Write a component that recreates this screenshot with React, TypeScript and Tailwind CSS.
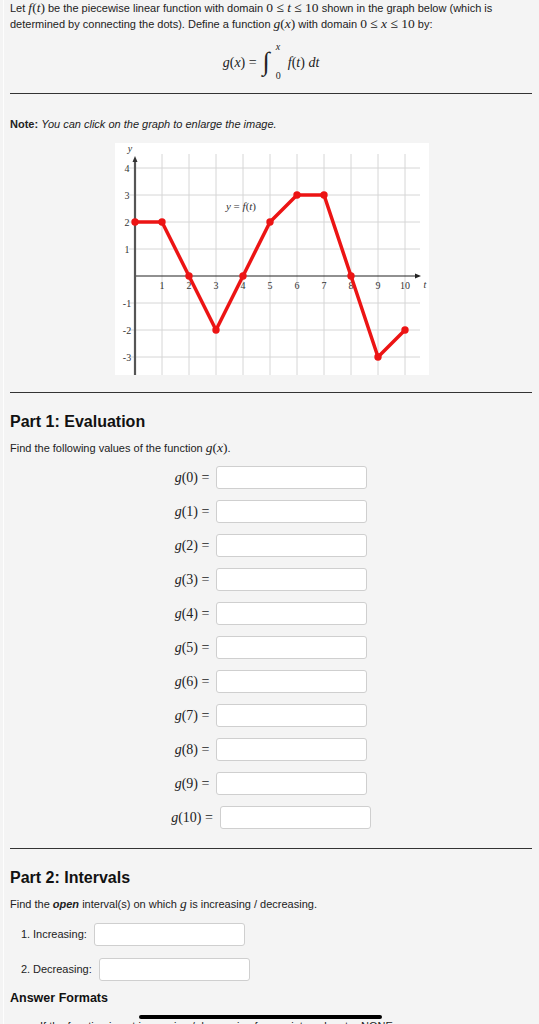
import React from "react";

const serif = "font-['Liberation_Serif','Times_New_Roman',serif]";

function M({ children, className = "" }: { children: React.ReactNode; className?: string }) {
  return <span className={`${serif} text-[13.5px] ${className}`}>{children}</span>;
}

const points: [number, number][] = [
  [0, 2], [1, 2], [2, 0], [3, -2], [4, 0], [5, 2], [6, 3], [7, 3], [8, 0], [9, -3], [10, -2],
];

const X = (t: number) => 20 + 27 * t;
const Y = (v: number) => 133 - 27 * v;

function Graph() {
  const ys = [4, 3, 2, 1, -1, -2, -3];
  return (
    <div className="ml-[105px] h-[232px] w-[314px] bg-white">
      <svg width="314" height="232" viewBox="0 0 314 232" className="block">
        {Array.from({ length: 10 }, (_, i) => (
          <line key={"v" + i} x1={X(i + 1)} x2={X(i + 1)} y1={11} y2={232} stroke="#d6d6d6" strokeWidth="1" />
        ))}
        {ys.map((v) => (
          <line key={"h" + v} x1={14} x2={305} y1={Y(v)} y2={Y(v)} stroke="#d6d6d6" strokeWidth="1" />
        ))}
        <line x1={X(0)} x2={302} y1={Y(0)} y2={Y(0)} stroke="#222" strokeWidth="1.2" />
        <path d="M306 133 L300 130.5 L300 135.5 Z" fill="#222" />
        <line x1={X(0)} x2={X(0)} y1={232} y2={18} stroke="#555" strokeWidth="2.2" />
        <path d="M20 13 L17.5 19 L22.5 19 Z" fill="#333" />
        <g className={serif} fontSize="10" fill="#333">
          <text x="15" y="9" fontStyle="italic" textAnchor="middle">y</text>
          {ys.map((v) => (
            <text key={"yl" + v} x="12" y={Y(v) + 3.5} textAnchor="middle">{v < 0 ? `-${-v}` : v}</text>
          ))}
          {Array.from({ length: 10 }, (_, i) => (
            <text key={"xl" + i} x={X(i + 1)} y="146" textAnchor="middle">{i + 1}</text>
          ))}
          <text x="310" y="145" fontStyle="italic" textAnchor="middle">t</text>
          <text x="126" y="67" textAnchor="middle" fontSize="11">
            <tspan fontStyle="italic">y</tspan> = <tspan fontStyle="italic">f</tspan>(<tspan fontStyle="italic">t</tspan>)
          </text>
        </g>
        <polyline
          points={points.map(([t, v]) => `${X(t)},${Y(v)}`).join(" ")}
          fill="none"
          stroke="#ec1414"
          strokeWidth="3.5"
          strokeLinejoin="round"
        />
        {points.map(([t, v]) => (
          <circle key={t} cx={X(t)} cy={Y(v)} r="3.7" fill="#ec1414" />
        ))}
      </svg>
    </div>
  );
}

function Field({ className = "w-[151px]" }: { className?: string }) {
  return <div className={`h-[23px] rounded-[3px] border border-[#cfcfcf] bg-white ${className}`} />;
}

export default function App() {
  const rows = Array.from({ length: 11 }, (_, i) => i);
  return (
    <div className="relative h-[1024px] overflow-hidden bg-[#f4f4f4] pl-[3px] font-['Liberation_Sans',Arial,sans-serif] text-[11px] text-[#222]">
      <div className="h-full border-l border-[#fdfdfd] pl-[6px] pr-[7px]">
        <div className="leading-[15px]">
          <div className="whitespace-nowrap">
            Let <M><i>f</i>(<i>t</i>)</M> be the piecewise linear function with domain <M>0 ≤ <i>t</i> ≤ 10</M> shown in the graph below (which is
          </div>
          <div className="whitespace-nowrap">
            determined by connecting the dots). Define a function <M><i>g</i>(<i>x</i>)</M> with domain <M>0 ≤ <i>x</i> ≤ 10</M> by:
          </div>
        </div>

        <div className={`mt-[10px] flex h-[40px] items-center justify-center ${serif} text-[14px]`}>
          <span>
            <i>g</i>(<i>x</i>) =
          </span>
          <span className="relative ml-[6px] mr-[18px] inline-block text-[26px] italic leading-none">
            ∫
            <span className="absolute left-[13px] top-[-7px] text-[10px] italic">x</span>
            <span className="absolute left-[13px] top-[22px] text-[10px] not-italic">0</span>
          </span>
          <span>
            <i>f</i>(<i>t</i>) <i>dt</i>
          </span>
        </div>

        <div className="mt-[11px] border-t border-[#333]" />

        <div className="mt-[23px] leading-[15px]">
          <b>Note:</b> <i>You can click on the graph to enlarge the image.</i>
        </div>

        <div className="mt-[11px]">
          <Graph />
        </div>

        <div className="mt-[17px] border-t border-[#333]" />

        <h2 className="mt-[19px] text-[16px] font-bold leading-[20px] text-[#111]">Part 1: Evaluation</h2>
        <p className="mt-[8px] leading-[15px]">
          Find the following values of the function <M><i>g</i>(<i>x</i>)</M>.
        </p>

        <div className="mt-[10px] flex flex-col items-center gap-[11px]">
          {rows.map((i) => (
            <div key={i} className="flex items-center gap-[7px]">
              <span className={`${serif} text-[14px]`}>
                <i>g</i>({i}) =
              </span>
              <Field />
            </div>
          ))}
        </div>

        <div className="mt-[19px] border-t border-[#333]" />

        <h2 className="mt-[19px] text-[16px] font-bold leading-[20px] text-[#111]">Part 2: Intervals</h2>
        <p className="mt-[8px] leading-[15px]">
          Find the <b><i>open</i></b> interval(s) on which <M><i>g</i></M> is increasing / decreasing.
        </p>

        <div className="mt-[11px] flex items-center pl-[11px]">
          <span className="w-[12px]">1.</span>
          <span>Increasing:</span>
          <Field className="ml-[7px] w-[151px]" />
        </div>
        <div className="mt-[12px] flex items-center pl-[11px]">
          <span className="w-[12px]">2.</span>
          <span>Decreasing:</span>
          <Field className="ml-[7px] w-[151px]" />
        </div>

        <h3 className="mt-[9px] text-[12.5px] font-bold leading-[16px] text-[#111]">Answer Formats</h3>
        <ul className="mt-[13px] list-disc pl-[30px] leading-[15px]">
          <li>If the function is not increasing / decreasing for any interval, enter NONE.</li>
          <li>If there are multiple intervals, separate them with commas.</li>
        </ul>
      </div>
      <div className="absolute left-[139px] top-[1015px] h-[4px] w-[243px] rounded-full bg-black" />
    </div>
  );
}
